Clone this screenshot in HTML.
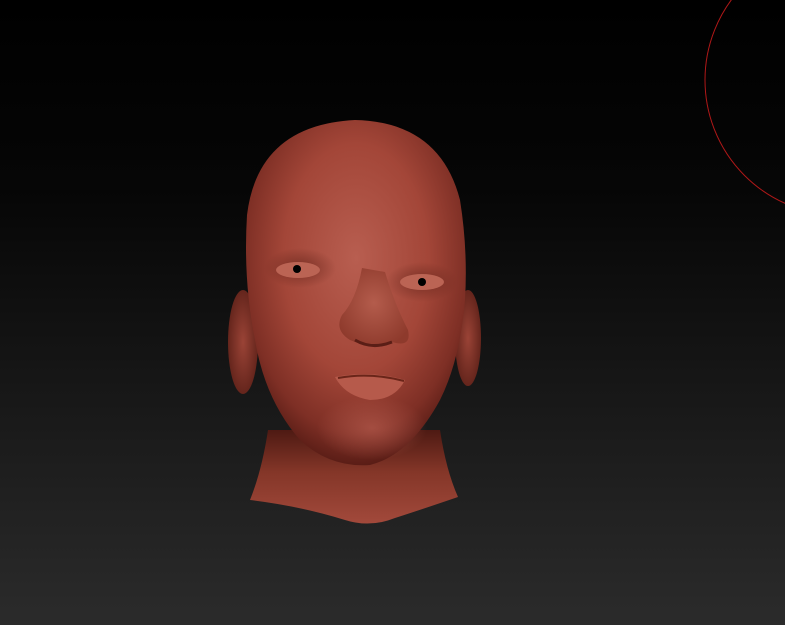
<!DOCTYPE html><html><head><style>html,body{margin:0;padding:0;width:785px;height:625px;overflow:hidden;background:#000}</style></head><body>
<svg width="785" height="625" viewBox="0 0 785 625" xmlns="http://www.w3.org/2000/svg">
<defs>
<linearGradient id="bg" x1="0" y1="0" x2="0" y2="1"><stop offset="0" stop-color="#000"/><stop offset="0.3" stop-color="#060606"/><stop offset="1" stop-color="#2b2b2b"/></linearGradient>
<radialGradient id="skin" cx="0.5" cy="0.4" r="0.6"><stop offset="0" stop-color="#b85e50"/><stop offset="0.55" stop-color="#a34638"/><stop offset="0.85" stop-color="#7e2f25"/><stop offset="1" stop-color="#5a1d16"/></radialGradient>
<linearGradient id="neck" x1="0" y1="0" x2="0" y2="1"><stop offset="0" stop-color="#4e1a13"/><stop offset="0.45" stop-color="#843628"/><stop offset="1" stop-color="#a2493b"/></linearGradient>
<radialGradient id="ear" cx="0.5" cy="0.5" r="0.6"><stop offset="0" stop-color="#9a4336"/><stop offset="1" stop-color="#5a1f17"/></radialGradient>
<radialGradient id="nose" cx="0.5" cy="0.45" r="0.6"><stop offset="0" stop-color="#b45c4c"/><stop offset="1" stop-color="#8e3a2c"/></radialGradient>
<radialGradient id="chin" cx="0.5" cy="0.5" r="0.5"><stop offset="0" stop-color="#bb6052" stop-opacity="0.6"/><stop offset="1" stop-color="#bb6052" stop-opacity="0"/></radialGradient>
<radialGradient id="sock" cx="0.5" cy="0.5" r="0.5"><stop offset="0" stop-color="#6e2a20" stop-opacity="0.8"/><stop offset="1" stop-color="#6e2a20" stop-opacity="0"/></radialGradient>
</defs>
<rect width="785" height="625" fill="url(#bg)"/>
<circle cx="840" cy="80" r="135" fill="none" stroke="#b01818" stroke-width="1"/>
<path d="M250 500 Q262 470 268 430 L440 430 Q446 470 458 497 Q420 510 395 518 Q370 528 345 520 Q300 506 250 500Z" fill="url(#neck)"/>
<ellipse cx="243" cy="342" rx="15" ry="52" fill="url(#ear)"/>
<ellipse cx="468" cy="338" rx="13" ry="48" fill="url(#ear)"/>
<path d="M355 120 Q440 122 460 200 Q468 250 465 300 Q460 360 440 400 Q410 455 370 465 Q330 468 300 440 Q265 400 255 340 Q243 280 247 215 Q258 125 355 120Z" fill="url(#skin)"/>
<ellipse cx="300" cy="268" rx="36" ry="20" fill="url(#sock)"/>
<ellipse cx="422" cy="282" rx="36" ry="20" fill="url(#sock)"/>
<ellipse cx="298" cy="270" rx="22" ry="8" fill="#bb6454"/>
<ellipse cx="422" cy="282" rx="22" ry="8" fill="#bb6454"/>
<circle cx="297" cy="269" r="4" fill="#000"/>
<circle cx="422" cy="282" r="4" fill="#000"/>
<path d="M362 268 Q356 300 342 315 Q334 330 350 340 Q372 350 392 342 Q412 348 408 330 Q395 305 385 272Z" fill="url(#nose)"/>
<path d="M355 340 Q372 350 392 342" stroke="#5a1e16" stroke-width="3" fill="none"/>
<path d="M335 377 Q370 370 405 380 Q395 400 370 400 Q345 396 335 377Z" fill="#b65a4b"/>
<path d="M338 378 Q370 372 404 381" stroke="#6a2519" stroke-width="2" fill="none"/>
<ellipse cx="372" cy="428" rx="55" ry="32" fill="url(#chin)"/>
</svg>
</body></html>
